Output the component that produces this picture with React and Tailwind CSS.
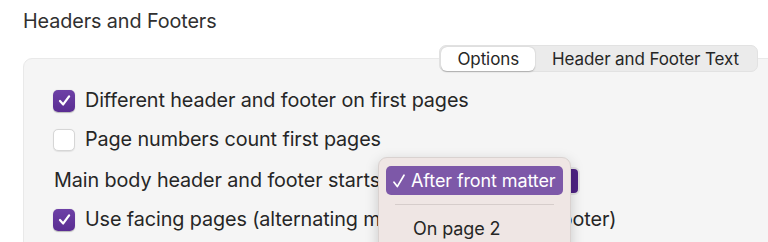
function CheckBox({ checked }) {
	if (checked) {
		return (
			<span className="w-[22px] h-[22px] rounded-[5px] bg-gradient-to-b from-[#6d40a6] to-[#5a2d92] flex items-center justify-center flex-shrink-0 shadow-[0_0.5px_1px_rgba(0,0,0,0.25)]">
				<svg width="15" height="15" viewBox="0 0 16 16" fill="none" aria-hidden>
					<path d="M3.2 8.6 L6.6 12.2 L12.9 3.6" stroke="white" strokeWidth="2.4" strokeLinecap="round" strokeLinejoin="round" />
				</svg>
			</span>
		);
	}
	return (
		<span className="w-[22px] h-[22px] rounded-[5px] bg-white border border-[#d6d6d6] flex-shrink-0 shadow-[0_0.5px_1px_rgba(0,0,0,0.08)]" />
	);
}

function Row({ checked, children }) {
	return (
		<div className="flex items-center gap-[10px] h-[39px] whitespace-nowrap">
			<CheckBox checked={checked} />
			<span>{children}</span>
		</div>
	);
}

export default function App() {
	return (
		<div className="w-[768px] h-[242px] overflow-hidden bg-white text-[#262626] font-['Inter',sans-serif] text-[19.8px] tracking-[-0.1px]">
			<h1 className="pl-[23px] pt-[9px] text-[19.8px] text-[#303030] leading-[24px]">Headers and Footers</h1>
			<div className="flex justify-end pr-[10px] mt-[12px] relative z-10">
				<div className="flex items-center h-[27px] rounded-[7px] bg-[#ebebeb] border border-[#e2e2e2] p-[1px]">
					<button className="h-[24px] px-[16px] rounded-[6px] bg-white shadow-[0_0.5px_1.5px_rgba(0,0,0,0.25)] text-[17px] text-[#262626]">
						Options
					</button>
					<button className="h-[24px] px-[17px] text-[17px] text-[#262626]">Header and Footer Text</button>
				</div>
			</div>
			<div className="ml-[23px] mr-[-20px] -mt-[14px] rounded-[9px] bg-[#f5f5f5] border border-[#e9e9e9] pt-[22px] pl-[29px] h-[220px]">
				<Row checked>Different header and footer on first pages</Row>
				<Row>Page numbers count first pages</Row>
				<div className="flex items-center h-[41px] pl-px pt-[3px] relative whitespace-nowrap">
					<span>Main body header and footer starts</span>
					<div className="ml-[4px] w-[196px] h-[28px] rounded-[6px] bg-[#4d2283] border-2 border-[#e2e2e2] flex-shrink-0" />
					<div className="absolute left-[325px] top-[-2px] w-[193px] h-[100px] rounded-[9px] bg-[#efe6e4] border border-[#d9d2d0] shadow-[0_4px_14px_rgba(0,0,0,0.18)] px-[7px] pt-[8px] text-[18px]">
						<div className="h-[29px] rounded-[5px] bg-[#7d58a8] text-white flex items-center pl-[7px] gap-[6px]">
							<svg width="12" height="14" viewBox="0 0 12 14" fill="none" aria-hidden>
								<path d="M1 8.2 L4.3 12.6 L11 1.2" stroke="white" strokeWidth="1.7" strokeLinecap="round" strokeLinejoin="round" />
							</svg>
							<span>After front matter</span>
						</div>
						<div className="mx-[9px] mt-[9px] border-t border-[#d6cdcb]" />
						<div className="pl-[27px] pt-[10px]">On page 2</div>
					</div>
				</div>
				<Row checked>Use facing pages (alternating margins and header/footer)</Row>
			</div>
		</div>
	);
}
